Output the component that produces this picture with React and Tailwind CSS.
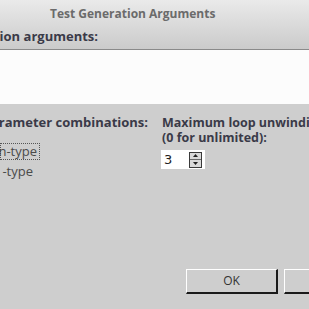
import React from "react";

const font = { fontFamily: '"Open Sans", "DejaVu Sans", sans-serif' };

function Spinner() {
  return (
    <div className="w-[44px] h-[19px] bg-white flex items-center justify-between pl-[3px] pr-[3px]">
      <span className="text-[13px] text-[#222] leading-none" style={{ fontFamily: '"DejaVu Sans", sans-serif' }}>3</span>
      <div className="w-[13px] h-[16px] border border-[#3a3a3a] bg-[#dadada] flex flex-col">
        <div className="flex-1 flex items-center justify-center border-b border-[#6a6a6a]">
          <svg width="5" height="3" viewBox="0 0 5 3"><path d="M2.5 0 L5 3 L0 3 Z" fill="#222" /></svg>
        </div>
        <div className="flex-1 flex items-center justify-center">
          <svg width="5" height="3" viewBox="0 0 5 3"><path d="M0 0 L5 0 L2.5 3 Z" fill="#222" /></svg>
        </div>
      </div>
    </div>
  );
}

export default function App() {
  return (
    <div className="w-[309px] h-[309px] overflow-hidden bg-[#cecece] flex flex-col" style={font}>
      <div className="h-[49px] bg-gradient-to-b from-[#eaeaea] to-[#cbcbcb] flex flex-col shrink-0">
        <div className="h-[28px] flex items-center pl-[50px] text-[12px] font-bold text-[#6b6b6b] whitespace-nowrap">
          Test Generation Arguments
        </div>
        <div className="h-[18px] w-[98px] flex items-center justify-end text-[13px] font-bold text-[#3a3a48] whitespace-nowrap">
          Test generation arguments:
        </div>
      </div>
      <div className="h-px bg-[#8a8a8a] shrink-0" />
      <div className="h-[54px] bg-[#fcfcfc] shrink-0" />
      <div className="flex pt-[11px] shrink-0">
        <div className="w-[162px] shrink-0 flex flex-col">
          <div className="w-[148px] h-[16px] flex items-center justify-end text-[13px] font-bold text-[#3a3a48] whitespace-nowrap">
            Parameter combinations:
          </div>
          <div className="mt-[12px] w-[40px] h-[17px] border border-dotted border-[#555] flex items-center justify-end pr-[2px] text-[13px] text-[#4a4a4a] whitespace-nowrap">
            Function-type
          </div>
          <div className="mt-[4px] w-[33px] h-[16px] flex items-center justify-end text-[13px] text-[#4a4a4a] whitespace-nowrap">
            Return type -type
          </div>
        </div>
        <div className="flex flex-col">
          <div className="text-[12.5px] font-bold text-[#3a3a48] leading-[15px] whitespace-nowrap">
            Maximum loop unwinding
          </div>
          <div className="text-[12.5px] font-bold text-[#3a3a48] leading-[15px] whitespace-nowrap">
            (0 for unlimited):
          </div>
          <div className="mt-[5px] -ml-[1px]">
            <Spinner />
          </div>
        </div>
      </div>
      <div className="flex-1" />
      <div className="flex gap-[6px] pl-[186px] pb-[15px] shrink-0">
        <button className="w-[92px] h-[25px] shrink-0 bg-[#cecece] border-t border-l border-white border-b-2 border-r-2 border-b-[#1a1a1a] border-r-[#1a1a1a] text-[12px] text-[#333] flex items-center justify-center">
          OK
        </button>
        <button className="w-[92px] h-[25px] shrink-0 bg-[#cecece] border-t border-l border-white border-b-2 border-r-2 border-b-[#1a1a1a] border-r-[#1a1a1a] text-[12px] text-[#333] flex items-center justify-center">
          Cancel
        </button>
      </div>
    </div>
  );
}
